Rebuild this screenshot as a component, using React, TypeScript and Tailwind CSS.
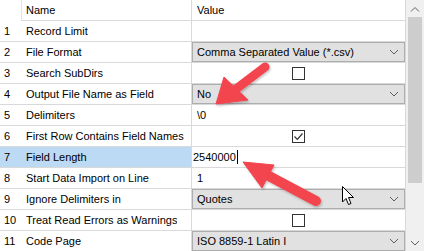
import React from 'react';

type Kind = 'text' | 'combo' | 'check' | 'edit';

const ROWS: { n: number; name: string; kind: Kind; value?: string; checked?: boolean; selected?: boolean }[] = [
  { n: 1, name: 'Record Limit', kind: 'text', value: '' },
  { n: 2, name: 'File Format', kind: 'combo', value: 'Comma Separated Value (*.csv)' },
  { n: 3, name: 'Search SubDirs', kind: 'check', checked: false },
  { n: 4, name: 'Output File Name as Field', kind: 'combo', value: 'No' },
  { n: 5, name: 'Delimiters', kind: 'text', value: '\\0' },
  { n: 6, name: 'First Row Contains Field Names', kind: 'check', checked: true },
  { n: 7, name: 'Field Length', kind: 'edit', value: '2540000', selected: true },
  { n: 8, name: 'Start Data Import on Line', kind: 'text', value: '1' },
  { n: 9, name: 'Ignore Delimiters in', kind: 'combo', value: 'Quotes' },
  { n: 10, name: 'Treat Read Errors as Warnings', kind: 'check', checked: false },
  { n: 11, name: 'Code Page', kind: 'combo', value: 'ISO 8859-1 Latin I' },
];

function Chevron({ up = false, className = '' }: { up?: boolean; className?: string }) {
  return (
    <svg width="10" height="6" viewBox="0 0 10 6" className={className}>
      <path d={up ? 'M1 5.5 L5 1.5 L9 5.5' : 'M1 1 L5 5 L9 1'} fill="none" stroke="currentColor" strokeWidth="1" />
    </svg>
  );
}

function CheckBox({ checked }: { checked?: boolean }) {
  return (
    <div className="w-[13px] h-[13px] border border-[#333333] bg-white flex items-center justify-center">
      {checked && (
        <svg width="11" height="11" viewBox="0 0 11 11">
          <path d="M1.5 5.5 L4.3 8.3 L9.5 2.5" fill="none" stroke="#333333" strokeWidth="1.2" />
        </svg>
      )}
    </div>
  );
}

function ValueCell({ row }: { row: (typeof ROWS)[number] }) {
  if (row.kind === 'combo') {
    return (
      <div className="h-full w-full border border-[#adadad] bg-[#e1e1e1] flex items-center pl-[4px] pr-[5px]">
        <span className="flex-1 truncate">{row.value}</span>
        <Chevron className="text-[#5f5f5f]" />
      </div>
    );
  }
  if (row.kind === 'check') {
    return (
      <div className="h-full w-full flex items-center justify-center">
        <CheckBox checked={row.checked} />
      </div>
    );
  }
  if (row.kind === 'edit') {
    return (
      <div className="h-full w-full flex items-center pl-[1px]">
        <span>{row.value}</span>
        <span className="ml-[1px] w-px h-[14px] bg-black" />
      </div>
    );
  }
  return <div className="h-full w-full flex items-center pl-[5px]">{row.value}</div>;
}

function Overlay() {
  return (
    <svg width="424" height="251" className="absolute left-0 top-0 pointer-events-none">
      <defs>
        <filter id="sh" x="-20%" y="-20%" width="140%" height="140%">
          <feDropShadow dx="1" dy="1.5" stdDeviation="1" floodColor="#000" floodOpacity="0.25" />
        </filter>
      </defs>
      <g fill="#f2444d" stroke="#f2444d" filter="url(#sh)">
        <line x1="265" y1="67" x2="236" y2="89" strokeWidth="9" strokeLinecap="round" />
        <polygon points="216,104 224,77 248,100" strokeWidth="1" strokeLinejoin="round" />
        <line x1="316" y1="201" x2="267" y2="175" strokeWidth="10" strokeLinecap="round" />
        <polygon points="243,162 274,165 262,188" strokeWidth="1" strokeLinejoin="round" />
      </g>
      <path
        d="M342.5 186.5 L342.5 202 L346 198.5 L348.5 204.5 L351 203.5 L348.5 197.5 L353.5 197.5 Z"
        fill="#ffffff"
        stroke="#000000"
        strokeWidth="1"
        strokeLinejoin="round"
      />
    </svg>
  );
}

export default function App() {
  return (
    <div
      className="relative w-[424px] h-[251px] overflow-hidden bg-white text-[11px] text-black flex"
      style={{ fontFamily: '"Segoe UI", "Liberation Sans", Arial, sans-serif' }}
    >
      {/* Grid */}
      <div className="w-[406px] border-r border-[#d9d9d9] flex flex-col">
        <div className="h-[21px] flex shrink-0">
          <div className="w-[22px] border-r border-[#e3e3e3]" />
          <div className="w-[170px] border-b border-r border-[#d9d9d9] flex items-center pl-[4px]">Name</div>
          <div className="flex-1 border-b border-[#d9d9d9] flex items-center pl-[5px]">Value</div>
        </div>
        {ROWS.map((row) => (
          <div key={row.n} className="h-[21px] flex shrink-0 border-b border-[#d9d9d9]">
            <div className={`w-[192px] flex items-center border-r border-[#d9d9d9] ${row.selected ? 'bg-[#bcdaf4]' : ''}`}>
              <span className="w-[26px] pl-[4px]">{row.n}</span>
              <span className="truncate">{row.name}</span>
            </div>
            <div className="flex-1 min-w-0">
              <ValueCell row={row} />
            </div>
          </div>
        ))}
      </div>

      {/* Scrollbar */}
      <div className="w-[18px] bg-[#f0f0f0] flex flex-col items-center">
        <div className="h-[17px] w-full flex items-center justify-center text-[#606060]">
          <Chevron up />
        </div>
        <div className="flex-1 w-full px-[2px]">
          <div className="h-[166px] w-full bg-[#cdcdcd]" />
        </div>
        <div className="h-[17px] w-full flex items-center justify-center text-[#606060]">
          <Chevron />
        </div>
      </div>

      <Overlay />
    </div>
  );
}
